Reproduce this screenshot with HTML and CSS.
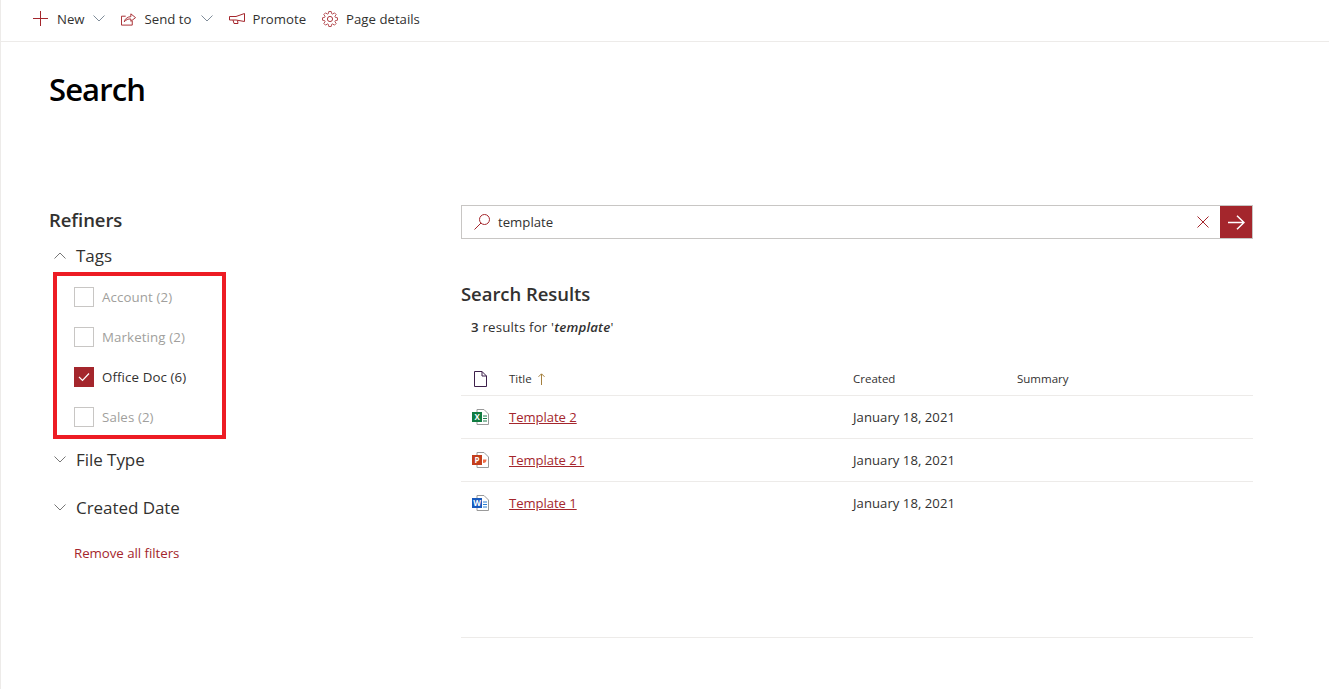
FILE: index.html
```html
<!DOCTYPE html>
<html lang="en">

<head>
    <meta charset="UTF-8" />
    <meta name="viewport" content="width=device-width, initial-scale=1.0" />
    <title>Search</title>
    <link rel="stylesheet" href="styles.css">
</head>

<body>
    <div class="commandbar">
        <button class="cmd">
            <svg class="cmd-icon" width="15" height="15" viewBox="0 0 15 15"><path d="M7.5 0V15M0 7.5H15" stroke="#a4262c" fill="none" /></svg>
            <span>New</span>
            <svg class="caret" width="12" height="7" viewBox="0 0 12 7"><path d="M0.5 0.5L6 6L11.5 0.5" stroke="#7f8c99" fill="none" /></svg>
        </button>
        <button class="cmd">
            <svg class="cmd-icon" width="15" height="14" viewBox="0 0 16 14"><path d="M5 4H0.5V13.5H12V9M3.5 10C4 7 7 4.5 10.5 4.5V1.5L15.5 5.5L10.5 9.5V7C8 6.5 5 8 3.5 10Z" stroke="#a4262c" fill="none" /></svg>
            <span>Send to</span>
            <svg class="caret caret-send" width="12" height="7" viewBox="0 0 12 7"><path d="M0.5 0.5L6 6L11.5 0.5" stroke="#7f8c99" fill="none" /></svg>
        </button>
        <button class="cmd">
            <svg class="cmd-icon cmd-icon-narrow" width="16" height="11" viewBox="0 0 16 11"><path d="M15.5 0.5V8.5L7 7H0.5V3.5H7ZM4 7L5 10.5H9L8.5 7.5" stroke="#a4262c" fill="none" /></svg>
            <span>Promote</span>
        </button>
        <button class="cmd">
            <svg class="cmd-icon cmd-icon-narrow" width="16" height="16" viewBox="0 0 16 16"><circle cx="8" cy="8" r="2.6" stroke="#a4262c" stroke-width="0.9" fill="none" /><path d="M6.36 2.64L6.81 0.49H9.19L9.64 2.64L10.63 3.06L12.47 1.85L14.15 3.53L12.94 5.37L13.36 6.36L15.51 6.81V9.19L13.36 9.64L12.94 10.63L14.15 12.47L12.47 14.15L10.63 12.94L9.64 13.36L9.19 15.51H6.81L6.36 13.36L5.37 12.94L3.53 14.15L1.85 12.47L3.06 10.63L2.64 9.64L0.49 9.19V6.81L2.64 6.36L3.06 5.37L1.85 3.53L3.53 1.85L5.37 3.06Z" stroke="#a4262c" stroke-width="0.8" fill="none" /></svg>
            <span>Page details</span>
        </button>
    </div>

    <h1 class="page-title">Search</h1>

    <div class="content">
        <aside class="refiners">
            <h2 class="section-title">Refiners</h2>

            <div class="group-head group-tags">
                <svg class="group-caret" width="12" height="7" viewBox="0 0 12 7"><path d="M0.5 6.5L6 1L11.5 6.5" stroke="#777" fill="none" /></svg>
                <span>Tags</span>
            </div>
            <div class="tag-box">
                <label class="tag muted"><span class="check"></span>Account (2)</label>
                <label class="tag muted"><span class="check"></span>Marketing (2)</label>
                <label class="tag">
                    <span class="check checked">
                        <svg width="12" height="10" viewBox="0 0 12 10"><path d="M1 5L4.5 8.5L11 1.5" stroke="#fff" stroke-width="1.2" fill="none" /></svg>
                    </span>
                    Office Doc (6)
                </label>
                <label class="tag muted"><span class="check"></span>Sales (2)</label>
            </div>

            <div class="group-head">
                <svg class="group-caret" width="12" height="7" viewBox="0 0 12 7"><path d="M0.5 0.5L6 6L11.5 0.5" stroke="#777" fill="none" /></svg>
                <span>File Type</span>
            </div>
            <div class="group-head">
                <svg class="group-caret" width="12" height="7" viewBox="0 0 12 7"><path d="M0.5 0.5L6 6L11.5 0.5" stroke="#777" fill="none" /></svg>
                <span>Created Date</span>
            </div>

            <a class="remove-filters" href="#">Remove all filters</a>
        </aside>

        <main class="results">
            <div class="searchbox">
                <svg class="search-icon" width="16" height="16" viewBox="0 0 16 16"><circle cx="10.5" cy="5.5" r="5" stroke="#a4262c" fill="none" /><path d="M7 9L0.5 15.5" stroke="#a4262c" fill="none" /></svg>
                <span class="search-text">template</span>
                <svg class="clear-icon" width="12" height="12" viewBox="0 0 12 12"><path d="M0.5 0.5L11.5 11.5M11.5 0.5L0.5 11.5" stroke="#a4262c" fill="none" /></svg>
                <span class="search-btn">
                    <svg width="17" height="15" viewBox="0 0 17 15"><path d="M0 7.5H16M9 0.8L16 7.5L9 14.2" stroke="#fff" stroke-width="1.5" fill="none" /></svg>
                </span>
            </div>

            <h2 class="section-title results-title">Search Results</h2>
            <p class="count"><b>3</b> results for '<b><i>template</i></b>'</p>

            <div class="row row-head">
                <span class="col-icon">
                    <svg width="13" height="16" viewBox="0 0 13 16"><path d="M0.5 0.5H8L12.5 5V15.5H0.5ZM8 0.5V5H12.5" stroke="#3d1f4a" fill="none" /></svg>
                </span>
                <span class="col-title">Title
                    <svg class="sort" width="7" height="12" viewBox="0 0 7 12"><path d="M3.5 12V1M0.5 3.8L3.5 0.8L6.5 3.8" stroke="#a5803f" fill="none" /></svg>
                </span>
                <span class="col-date">Created</span>
                <span>Summary</span>
            </div>

            <div class="row">
                <span class="col-icon">
                    <svg width="17" height="16" viewBox="0 0 17 16"><path d="M5 0.5H12L16.5 5V15.5H5Z" fill="#fff" stroke="#9a9a9a" /><path d="M11 7H15M11 9.5H15M11 12H15" stroke="#1f7a4d" /><rect x="0" y="3" width="10" height="10" fill="#107c41" /><text x="2.4" y="11" class="file-letter">X</text></svg>
                </span>
                <span class="col-title"><a href="#">Template 2</a></span>
                <span class="col-date">January 18, 2021</span>
            </div>
            <div class="row">
                <span class="col-icon">
                    <svg width="17" height="16" viewBox="0 0 17 16"><path d="M5 0.5H12L16.5 5V15.5H5Z" fill="#fff" stroke="#9a9a9a" /><path d="M11 7.5L14.5 7.5A3.5 3.5 0 0 1 11 11Z" fill="#ed6c47" /><rect x="0" y="3" width="10" height="10" fill="#c43e1c" /><text x="2.6" y="11" class="file-letter">P</text></svg>
                </span>
                <span class="col-title"><a href="#">Template 21</a></span>
                <span class="col-date">January 18, 2021</span>
            </div>
            <div class="row row-last">
                <span class="col-icon">
                    <svg width="17" height="16" viewBox="0 0 17 16"><path d="M5 0.5H12L16.5 5V15.5H5Z" fill="#fff" stroke="#9a9a9a" /><path d="M11 7H15M11 9.5H15M11 12H15" stroke="#2b7cd3" /><rect x="0" y="3" width="10" height="10" fill="#185abd" /><text x="1.2" y="11" class="file-letter">W</text></svg>
                </span>
                <span class="col-title"><a href="#">Template 1</a></span>
                <span class="col-date">January 18, 2021</span>
            </div>

            <div class="results-end"></div>
        </main>
    </div>
</body>

</html>
```

FILE: styles.css
```css
* {
    box-sizing: border-box;
}

html,
body {
    height: 100%;
}

body {
    margin: 0;
    font-family: 'Open Sans', 'Noto Sans', sans-serif;
    color: #323130;
    background: white;
    border-left: 1px solid #edebe9;
    overflow: hidden;
}

.commandbar {
    display: flex;
    align-items: center;
    gap: 16px;
    height: 42px;
    padding: 0 0 4px 32px;
    border-bottom: 1px solid #edebe9;
}

.cmd {
    display: flex;
    align-items: center;
    padding: 0;
    border: none;
    background: none;
    font-family: inherit;
    font-size: 13.2px;
    letter-spacing: 0.01px;
    color: #323130;
}

.cmd-icon {
    margin-right: 9px;
}

.cmd-icon-narrow {
    margin-right: 8px;
}

.caret {
    margin-left: 8px;
}

.caret-send {
    margin-left: 9px;
}

.page-title {
    margin: 26px 0 0 48px;
    height: 137px;
    font-size: 31px;
    line-height: 42px;
    font-weight: 600;
    letter-spacing: -0.9px;
    color: black;
}

.content {
    display: flex;
    padding-left: 48px;
}

.refiners {
    width: 412px;
    padding-top: 2px;
}

.section-title {
    margin: 0;
    font-size: 18.5px;
    line-height: 26px;
    font-weight: 600;
    letter-spacing: -0.05px;
}

.group-head {
    display: flex;
    align-items: center;
    height: 42px;
    margin-bottom: 6px;
    padding-left: 5px;
    font-size: 17px;
    letter-spacing: -0.05px;
}

.group-tags {
    height: 24px;
    margin: 10px 0 0;
}

.group-caret {
    margin-right: 10px;
}

.tag-box {
    display: flex;
    flex-direction: column;
    gap: 20px;
    width: 173px;
    height: 167px;
    margin: 5px 0 -1px 4px;
    padding: 11px 0 0 17px;
    border: 4px solid #ed1c24;
}

.tag {
    display: flex;
    align-items: center;
    gap: 8px;
    height: 20px;
    font-size: 13.3px;
    letter-spacing: 0.1px;
    color: #323130;
}

.tag.muted {
    color: #a19f9d;
}

.check {
    display: flex;
    align-items: center;
    justify-content: center;
    width: 20px;
    height: 20px;
    border: 1px solid #c8c6c4;
}

.check.checked {
    background: #a4262c;
    border-color: #a4262c;
}

.remove-filters {
    display: block;
    margin: 16px 0 0 25px;
    font-size: 13.3px;
    line-height: 18px;
    letter-spacing: -0.05px;
    color: #a4262c;
    text-decoration: none;
}

.results {
    width: 792px;
}

.searchbox {
    display: flex;
    align-items: center;
    height: 34px;
    padding-left: 12px;
    border: 1px solid #c8c6c4;
}

.search-icon {
    margin-right: 8px;
}

.search-text {
    flex: 1;
    font-size: 13.2px;
}

.clear-icon {
    margin-right: 11px;
}

.search-btn {
    display: flex;
    align-items: center;
    justify-content: center;
    width: 32px;
    height: 32px;
    background: #a4262c;
}

.results-title {
    margin-top: 42px;
}

.count {
    margin: 11px 0 0 10px;
    font-size: 13.3px;
    line-height: 18px;
    letter-spacing: 0.17px;
}

.count b {
    font-weight: 600;
}

.row {
    display: flex;
    align-items: center;
    height: 43px;
    border-bottom: 1px solid #edebe9;
    font-size: 13.1px;
    letter-spacing: 0.05px;
}

.row-last {
    padding-bottom: 1px;
    border-bottom: none;
}

.row-head {
    height: 42px;
    margin-top: 18px;
    padding-top: 8px;
    font-size: 11.5px;
    letter-spacing: 0;
}

.col-icon {
    display: flex;
    width: 48px;
    padding-left: 11px;
}

.row-head .col-icon {
    padding-left: 13px;
}

.col-title {
    display: flex;
    align-items: center;
    gap: 6px;
    width: 344px;
}

.col-title a {
    letter-spacing: -0.05px;
    color: #a4262c;
}

.col-date {
    width: 164px;
}

.file-letter {
    font-size: 8px;
    font-weight: 700;
    fill: white;
}

.results-end {
    height: 1px;
    margin-top: 112px;
    background: #edebe9;
}
```
